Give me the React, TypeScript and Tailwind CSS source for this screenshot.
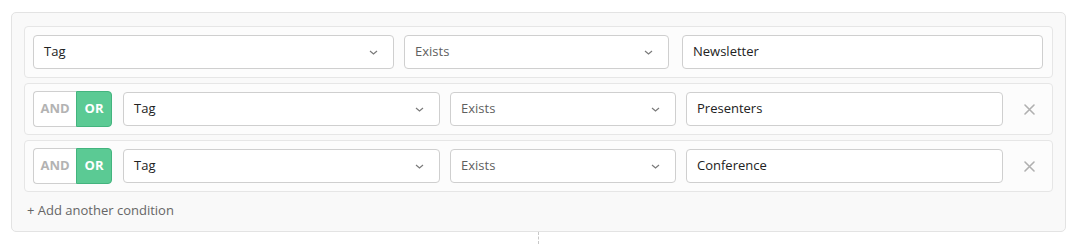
import { ReactNode } from 'react';

const font = { fontFamily: '"Open Sans", "Noto Sans", sans-serif' };

function Chevron() {
  return (
    <svg width="9" height="5" viewBox="0 0 9 5" className="shrink-0">
      <polyline points="1,1 4.5,4 8,1" fill="none" stroke="#7a7a7a" strokeWidth="1.2" />
    </svg>
  );
}

function Select({ label, width, muted }: { label: string; width: string; muted?: boolean }) {
  return (
    <div
      className={`${width} h-[34px] shrink-0 flex items-center justify-between pl-[10px] pr-[15px] bg-white border border-[#cfcfcf] rounded-[4px] text-[13px] ${
        muted ? 'text-[#5f5f5f]' : 'text-[#222]'
      }`}
    >
      <span>{label}</span>
      <Chevron />
    </div>
  );
}

function TextInput({ value, width }: { value: string; width: string }) {
  return (
    <div
      className={`${width} h-[34px] shrink-0 flex items-center pl-[10px] bg-white border border-[#cfcfcf] rounded-[4px] text-[13px] text-[#222]`}
    >
      {value}
    </div>
  );
}

function Row({ children }: { children: ReactNode }) {
  return (
    <div className="h-[52px] flex items-center px-2 bg-[#fcfcfc] border border-[#e6e6e6] rounded-[4px]">
      {children}
    </div>
  );
}

function AndOr() {
  return (
    <div className="w-[79px] h-[36px] shrink-0 flex text-[13px] font-bold">
      <div className="w-[43px] flex items-center justify-center bg-white border border-r-0 border-[#cfcfcf] rounded-l-[4px] text-[#b3b3b3]">
        AND
      </div>
      <div className="flex-1 flex items-center justify-center bg-[#5bca94] border border-[#43b47e] rounded-r-[4px] text-white">
        OR
      </div>
    </div>
  );
}

function RemoveIcon() {
  return (
    <div className="flex-1 flex items-center justify-center pl-[12px]">
      <svg width="11" height="11" viewBox="0 0 11 11">
        <path d="M1 1 L10 10 M10 1 L1 10" stroke="#b0b0b0" strokeWidth="1.6" strokeLinecap="round" />
      </svg>
    </div>
  );
}

const conditions = [
  { value: 'Presenters' },
  { value: 'Conference' },
];

export default function App() {
  return (
    <div className="w-[1080px] h-[244px] bg-white relative" style={font}>
      <div className="absolute left-0 right-0 top-0 pt-[12px] pl-[11px]">
        <div className="w-[1055px] h-[220px] bg-[#f9f9f9] border border-[#e3e3e3] rounded-[5px] px-3 pt-[13px] flex flex-col">
          <div className="flex flex-col gap-[5px]">
            <Row>
              <Select label="Tag" width="w-[361px]" />
              <div className="w-[10px] shrink-0" />
              <Select label="Exists" width="w-[265px]" muted />
              <div className="w-[13px] shrink-0" />
              <TextInput value="Newsletter" width="w-[361px]" />
            </Row>
            {conditions.map((c) => (
              <Row key={c.value}>
                <AndOr />
                <div className="w-[11px] shrink-0" />
                <Select label="Tag" width="w-[317px]" />
                <div className="w-[10px] shrink-0" />
                <Select label="Exists" width="w-[226px]" muted />
                <div className="w-[10px] shrink-0" />
                <TextInput value={c.value} width="w-[317px]" />
                <RemoveIcon />
              </Row>
            ))}
          </div>
          <div className="mt-[9px] pl-[3px] text-[13px] leading-[18px] text-[#666]">+ Add another condition</div>
        </div>
      </div>
      <div className="absolute left-[538px] top-[232px] h-[12px] border-l border-dashed border-[#c8c8c8]" />
    </div>
  );
}
